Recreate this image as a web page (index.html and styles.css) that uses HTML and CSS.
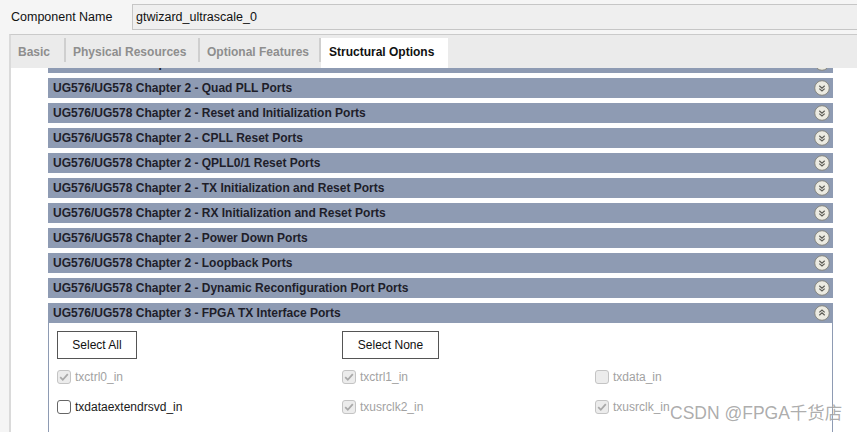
FILE: index.html
```html
<!DOCTYPE html>
<html>
<head>
<meta charset="utf-8">
<link rel="stylesheet" href="styles.css">
</head>
<body>
<div class="app">
  <div class="namebar">
    <span class="namelabel">Component Name</span>
    <div class="namefield">gtwizard_ultrascale_0</div>
  </div>
  <div class="frame">
    <div class="tabs">
      <div class="tab t-basic">Basic</div>
      <div class="tab t-phys">Physical Resources</div>
      <div class="tab t-opt">Optional Features</div>
      <div class="tab t-struct active">Structural Options</div>
    </div>
    <div class="panel">
      <div class="list">
        <div class="section"><div class="bar"><span>UG576/UG578 Chapter 2 - Common Ports</span><svg class="ic" viewBox="0 0 16 16"><circle cx="8" cy="8" r="7.3"/><path d="M5.3 5.8 L8 8.2 L10.7 5.8 M5.3 8.6 L8 11 L10.7 8.6"/></svg></div></div>
        <div class="section"><div class="bar"><span>UG576/UG578 Chapter 2 - Quad PLL Ports</span><svg class="ic" viewBox="0 0 16 16"><circle cx="8" cy="8" r="7.3"/><path d="M5.3 5.8 L8 8.2 L10.7 5.8 M5.3 8.6 L8 11 L10.7 8.6"/></svg></div></div>
        <div class="section"><div class="bar"><span>UG576/UG578 Chapter 2 - Reset and Initialization Ports</span><svg class="ic" viewBox="0 0 16 16"><circle cx="8" cy="8" r="7.3"/><path d="M5.3 5.8 L8 8.2 L10.7 5.8 M5.3 8.6 L8 11 L10.7 8.6"/></svg></div></div>
        <div class="section"><div class="bar"><span>UG576/UG578 Chapter 2 - CPLL Reset Ports</span><svg class="ic" viewBox="0 0 16 16"><circle cx="8" cy="8" r="7.3"/><path d="M5.3 5.8 L8 8.2 L10.7 5.8 M5.3 8.6 L8 11 L10.7 8.6"/></svg></div></div>
        <div class="section"><div class="bar"><span>UG576/UG578 Chapter 2 - QPLL0/1 Reset Ports</span><svg class="ic" viewBox="0 0 16 16"><circle cx="8" cy="8" r="7.3"/><path d="M5.3 5.8 L8 8.2 L10.7 5.8 M5.3 8.6 L8 11 L10.7 8.6"/></svg></div></div>
        <div class="section"><div class="bar"><span>UG576/UG578 Chapter 2 - TX Initialization and Reset Ports</span><svg class="ic" viewBox="0 0 16 16"><circle cx="8" cy="8" r="7.3"/><path d="M5.3 5.8 L8 8.2 L10.7 5.8 M5.3 8.6 L8 11 L10.7 8.6"/></svg></div></div>
        <div class="section"><div class="bar"><span>UG576/UG578 Chapter 2 - RX Initialization and Reset Ports</span><svg class="ic" viewBox="0 0 16 16"><circle cx="8" cy="8" r="7.3"/><path d="M5.3 5.8 L8 8.2 L10.7 5.8 M5.3 8.6 L8 11 L10.7 8.6"/></svg></div></div>
        <div class="section"><div class="bar"><span>UG576/UG578 Chapter 2 - Power Down Ports</span><svg class="ic" viewBox="0 0 16 16"><circle cx="8" cy="8" r="7.3"/><path d="M5.3 5.8 L8 8.2 L10.7 5.8 M5.3 8.6 L8 11 L10.7 8.6"/></svg></div></div>
        <div class="section"><div class="bar"><span>UG576/UG578 Chapter 2 - Loopback Ports</span><svg class="ic" viewBox="0 0 16 16"><circle cx="8" cy="8" r="7.3"/><path d="M5.3 5.8 L8 8.2 L10.7 5.8 M5.3 8.6 L8 11 L10.7 8.6"/></svg></div></div>
        <div class="section"><div class="bar"><span>UG576/UG578 Chapter 2 - Dynamic Reconfiguration Port Ports</span><svg class="ic" viewBox="0 0 16 16"><circle cx="8" cy="8" r="7.3"/><path d="M5.3 5.8 L8 8.2 L10.7 5.8 M5.3 8.6 L8 11 L10.7 8.6"/></svg></div></div>
        <div class="section open">
          <div class="bar"><span>UG576/UG578 Chapter 3 - FPGA TX Interface Ports</span><svg class="ic" viewBox="0 0 16 16"><circle cx="8" cy="8" r="7.3"/><path d="M5.3 7.4 L8 5 L10.7 7.4 M5.3 10.2 L8 7.8 L10.7 10.2"/></svg></div>
          <div class="body">
            <div class="grid">
              <div class="cell"><button class="btn b-all">Select All</button></div>
              <div class="cell"><button class="btn b-none">Select None</button></div>
              <div class="cell"></div>
              <label class="cb dis"><svg class="box" viewBox="0 0 14 14"><rect x="0.5" y="0.5" width="13" height="13" rx="2.5"/><path class="tick" d="M3.2 7.2 L5.8 9.8 L10.8 4.2"/></svg>txctrl0_in</label>
              <label class="cb dis"><svg class="box" viewBox="0 0 14 14"><rect x="0.5" y="0.5" width="13" height="13" rx="2.5"/><path class="tick" d="M3.2 7.2 L5.8 9.8 L10.8 4.2"/></svg>txctrl1_in</label>
              <label class="cb dis"><svg class="box" viewBox="0 0 14 14"><rect x="0.5" y="0.5" width="13" height="13" rx="2.5"/></svg>txdata_in</label>
              <label class="cb en"><svg class="box" viewBox="0 0 14 14"><rect x="0.5" y="0.5" width="13" height="13" rx="2.5"/></svg>txdataextendrsvd_in</label>
              <label class="cb dis"><svg class="box" viewBox="0 0 14 14"><rect x="0.5" y="0.5" width="13" height="13" rx="2.5"/><path class="tick" d="M3.2 7.2 L5.8 9.8 L10.8 4.2"/></svg>txusrclk2_in</label>
              <label class="cb dis"><svg class="box" viewBox="0 0 14 14"><rect x="0.5" y="0.5" width="13" height="13" rx="2.5"/><path class="tick" d="M3.2 7.2 L5.8 9.8 L10.8 4.2"/></svg>txusrclk_in</label>
            </div>
          </div>
        </div>
      </div>
    </div>
  </div>
  <div class="watermark">CSDN @FPGA千货店</div>
</div>
</body>
</html>
```
FILE: styles.css
```css
html, body {
  margin: 0;
  padding: 0;
}
body {
  width: 857px;
  height: 432px;
  overflow: hidden;
  background: #f5f5f5;
  font-family: "Liberation Sans", Arial, sans-serif;
  font-size: 12px;
  color: #1a1a1a;
}
.app {
  position: relative;
  width: 857px;
  height: 432px;
  overflow: hidden;
}
.namebar {
  height: 34px;
  display: flex;
  align-items: flex-start;
}
.namelabel {
  margin: 10px 0 0 11px;
  width: 121px;
  font-size: 12.5px;
  color: #111;
}
.namefield {
  margin-top: 4px;
  height: 24px;
  flex: 1;
  border: 1px solid #c6c6c6;
  border-right: none;
  background: #efefef;
  padding-left: 3px;
  line-height: 24px;
  font-size: 12.5px;
  color: #111;
}
.frame {
  margin-left: 9px;
  border-top: 1px solid #cacaca;
  border-left: 2px solid #dadada;
  height: 397px;
  display: flex;
  flex-direction: column;
}
.tabs {
  height: 33px;
  background: #ebebeb;
  display: flex;
  align-items: flex-end;
  flex-shrink: 0;
}
.tab {
  height: 30px;
  line-height: 28px;
  font-weight: bold;
  color: #8e8e8e;
  box-sizing: border-box;
  position: relative;
  padding-left: 7px;
}
.tab::after {
  content: "";
  position: absolute;
  right: 0;
  top: 0;
  bottom: 6px;
  width: 2px;
  background: #cfcfcf;
}
.t-basic { width: 55px; padding-left: 7px; }
.t-phys { width: 134px; padding-left: 7px; }
.t-opt { width: 121px; padding-left: 7px; }
.t-struct {
  width: 127px;
  background: #ffffff;
  color: #111;
  padding-left: 8px;
}
.t-struct::after { display: none; }
.panel {
  flex: 1;
  background: #ffffff;
  overflow: hidden;
  padding: 0 24px 0 37px;
}
.list {
  margin-top: -15px;
  display: flex;
  flex-direction: column;
  gap: 5px;
}
.bar {
  height: 20px;
  background: #8e9bb3;
  display: flex;
  align-items: center;
  justify-content: space-between;
  padding: 0 3px 0 5px;
  font-weight: bold;
  color: #1e1e2a;
}
.ic {
  width: 16px;
  height: 16px;
}
.ic circle {
  fill: #ecebe2;
  stroke: #85857e;
  stroke-width: 1;
}
.ic path {
  fill: none;
  stroke: #5c5c56;
  stroke-width: 1.2;
}
.body {
  border: 1px solid #8e9bb3;
  border-top: none;
  height: 108px;
  padding: 8px 0 0 8px;
}
.grid {
  display: grid;
  grid-template-columns: 285px 253px 1fr;
  grid-auto-rows: auto;
}
.cell {
  height: 28px;
  margin-bottom: 10px;
}
.btn {
  height: 28px;
  border: 1px solid #555;
  background: #fff;
  font-family: "Liberation Sans", Arial, sans-serif;
  font-size: 12px;
  color: #111;
  padding: 0;
}
.b-all { width: 80px; }
.b-none { width: 97px; }
.cb {
  display: flex;
  align-items: center;
  height: 16px;
  margin-bottom: 14px;
  font-size: 12px;
}
.box {
  width: 14px;
  height: 14px;
  margin-right: 4px;
}
.cb.dis { color: #a2a2a2; }
.cb.dis rect { fill: #ececec; stroke: #c4c4c4; }
.cb.dis .tick { fill: none; stroke: #a9a9a9; stroke-width: 1.8; }
.cb.en { color: #1a1a1a; }
.cb.en rect { fill: #fff; stroke: #666; }
.watermark {
  position: absolute;
  left: 670px;
  top: 399px;
  font-family: "Liberation Sans", "Noto Sans CJK SC", sans-serif;
  font-size: 17.5px;
  color: rgba(120, 120, 120, 0.62);
  text-shadow: 0 0 1px rgba(255, 255, 255, 0.8);
  white-space: nowrap;
}
```
